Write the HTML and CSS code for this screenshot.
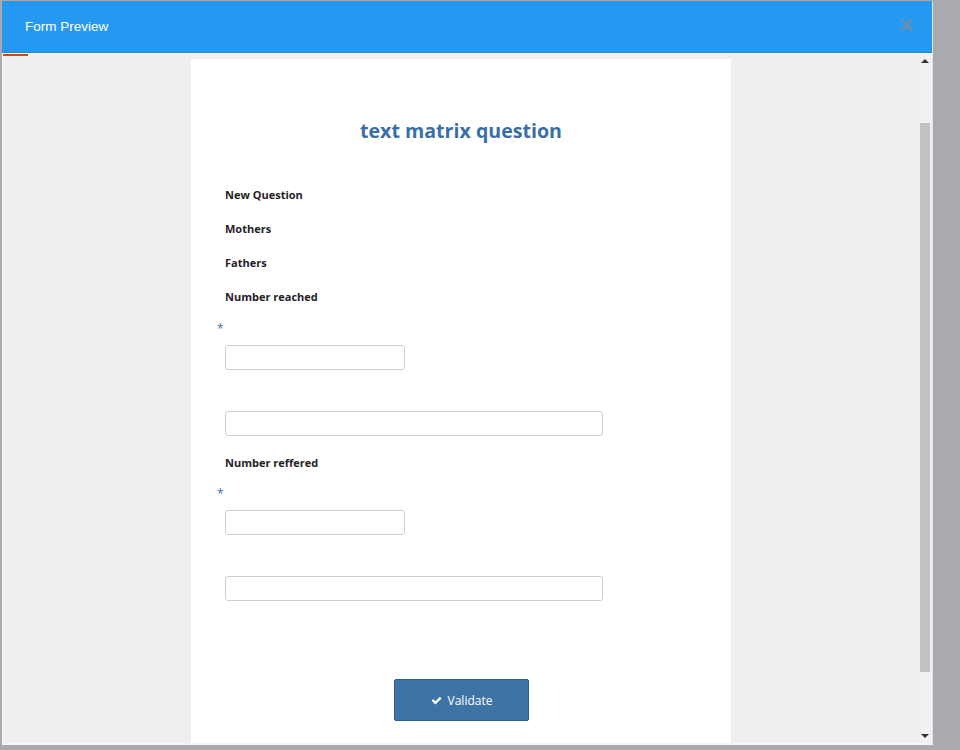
FILE: index.html
```html
<!DOCTYPE html>
<html lang="en">
<head>
<meta charset="utf-8">
<title>Form Preview</title>
<link rel="stylesheet" href="styles.css">
</head>
<body>
<div class="modal">
  <header class="modal-header">
    <span class="modal-title">Form Preview</span>
    <button class="close" type="button" aria-label="Close">
      <svg width="14" height="14" viewBox="0 0 14 14"><path d="M1.5 1.5 L12.5 12.5 M12.5 1.5 L1.5 12.5" stroke="#7f8b9a" stroke-width="2.2" stroke-linecap="butt"/></svg>
    </button>
  </header>
  <div class="modal-body">
    <div class="progress"></div>
    <div class="viewport">
      <div class="card">
        <h1 class="form-title">text matrix question</h1>
        <div class="question">
          <div class="label">New Question</div>
          <div class="label">Mothers</div>
          <div class="label">Fathers</div>
          <div class="label">Number reached</div>
          <div class="req">*</div>
          <input class="field short" type="text">
          <input class="field long" type="text">
          <div class="label">Number reffered</div>
          <div class="req tight">*</div>
          <input class="field short" type="text">
          <input class="field long" type="text">
        </div>
        <div class="actions">
          <button class="btn-validate" type="button">
            <svg class="check" width="11" height="11" viewBox="0 0 1792 1792"><path fill="#fff" d="M1671 566q0 40-28 68l-724 724-136 136q-28 28-68 28t-68-28l-136-136-362-362q-28-28-28-68t28-68l136-136q28-28 68-28t68 28l294 295 656-657q28-28 68-28t68 28l136 136q28 28 28 68z"/></svg>
            <span>Validate</span>
          </button>
        </div>
      </div>
    </div>
    <div class="scrollbar">
      <div class="sb-btn"><span class="tri up"></span></div>
      <div class="sb-track"><div class="sb-thumb"></div></div>
      <div class="sb-btn"><span class="tri down"></span></div>
    </div>
  </div>
</div>
</body>
</html>
```

FILE: styles.css
```css
html, body {
  margin: 0;
  padding: 0;
}
body {
  background: #a9aaae;
  height: 750px;
  overflow: hidden;
  font-family: "Open Sans", "Liberation Sans", sans-serif;
}
.modal {
  margin: 1px 0 0 2px;
  width: 930px;
  height: 742px;
  background: #efefef;
  border-right: 1px solid #e4e4e4;
  border-bottom: 2px solid #f6f6f6;
  display: flex;
  flex-direction: column;
  overflow: hidden;
}
.modal-header {
  height: 51px;
  flex: none;
  background: #2599f2;
  border-bottom: 1px solid #1b8be4;
  display: flex;
  align-items: center;
  justify-content: space-between;
  padding: 0 18px 0 23px;
}
.modal-title {
  font-family: "Liberation Sans", Arial, sans-serif;
  font-size: 13.5px;
  color: #fff;
}
.close {
  background: none;
  border: 0;
  padding: 0;
  width: 14px;
  height: 14px;
  margin-top: -4px;
  display: flex;
  cursor: pointer;
}
.modal-body {
  flex: 1;
  position: relative;
  display: flex;
  border-top: 1px solid #fafafa;
  border-left: 1px solid #f8f8f8;
  min-height: 0;
}
.progress {
  position: absolute;
  top: 0;
  left: 0;
  width: 25px;
  height: 2px;
  background: #d2470c;
}
.viewport {
  flex: 1;
  overflow: hidden;
  padding-top: 5px;
}
.card {
  width: 540px;
  margin: 0 auto;
  background: #fff;
  padding: 58px 0 60px;
  box-sizing: border-box;
}
.form-title {
  margin: 0;
  text-align: center;
  font-size: 19.6px;
  line-height: 27px;
  font-weight: 700;
  color: #3a6fa6;
}
.question {
  margin-top: 43px;
  padding-left: 34px;
  display: flex;
  flex-direction: column;
  align-items: flex-start;
}
.label {
  font-size: 11px;
  line-height: 16px;
  font-weight: 700;
  color: #1f2226;
  margin-bottom: 18px;
}
.req {
  margin-top: -2px;
  margin-left: -8px;
  font-size: 12px;
  line-height: 16px;
  color: #3a6fa6;
  margin-bottom: 8px;
}
.req.tight {
  margin-top: -3px;
  margin-bottom: 8px;
}
.field {
  box-sizing: border-box;
  height: 25px;
  border: 1px solid #cfcfcf;
  border-radius: 3px;
  background: #fff;
  margin: 0 0 41px;
  padding: 0 6px;
}
.field.long {
  margin-bottom: 19px;
  width: 378px;
}
.field.short {
  width: 180px;
}
.question .field.long:last-child {
  margin-bottom: 0;
}
.actions {
  display: flex;
  justify-content: center;
  margin-top: 78px;
  padding-left: 1px;
}
.btn-validate {
  width: 135px;
  height: 42px;
  background: #3e73a5;
  border: 1px solid #2c5d8c;
  border-radius: 2px;
  color: #fff;
  font-family: "Open Sans", "Liberation Sans", sans-serif;
  font-size: 12px;
  display: flex;
  align-items: center;
  justify-content: center;
  gap: 6px;
  padding: 0;
}
.check {
  display: block;
}
.scrollbar {
  width: 12px;
  flex: none;
  background: #f1f1f1;
  display: flex;
  flex-direction: column;
  margin-right: 1px;
}
.sb-btn {
  height: 14px;
  display: flex;
  align-items: center;
  justify-content: center;
}
.sb-track {
  flex: 1;
  padding-top: 55px;
}
.sb-thumb {
  width: 10px;
  height: 549px;
  margin-left: 1px;
  background: #c1c1c1;
}
.tri {
  width: 0;
  height: 0;
  border-left: 4px solid transparent;
  border-right: 4px solid transparent;
}
.tri.up {
  border-bottom: 4px solid #333;
}
.tri.down {
  border-top: 4px solid #333;
}
```
